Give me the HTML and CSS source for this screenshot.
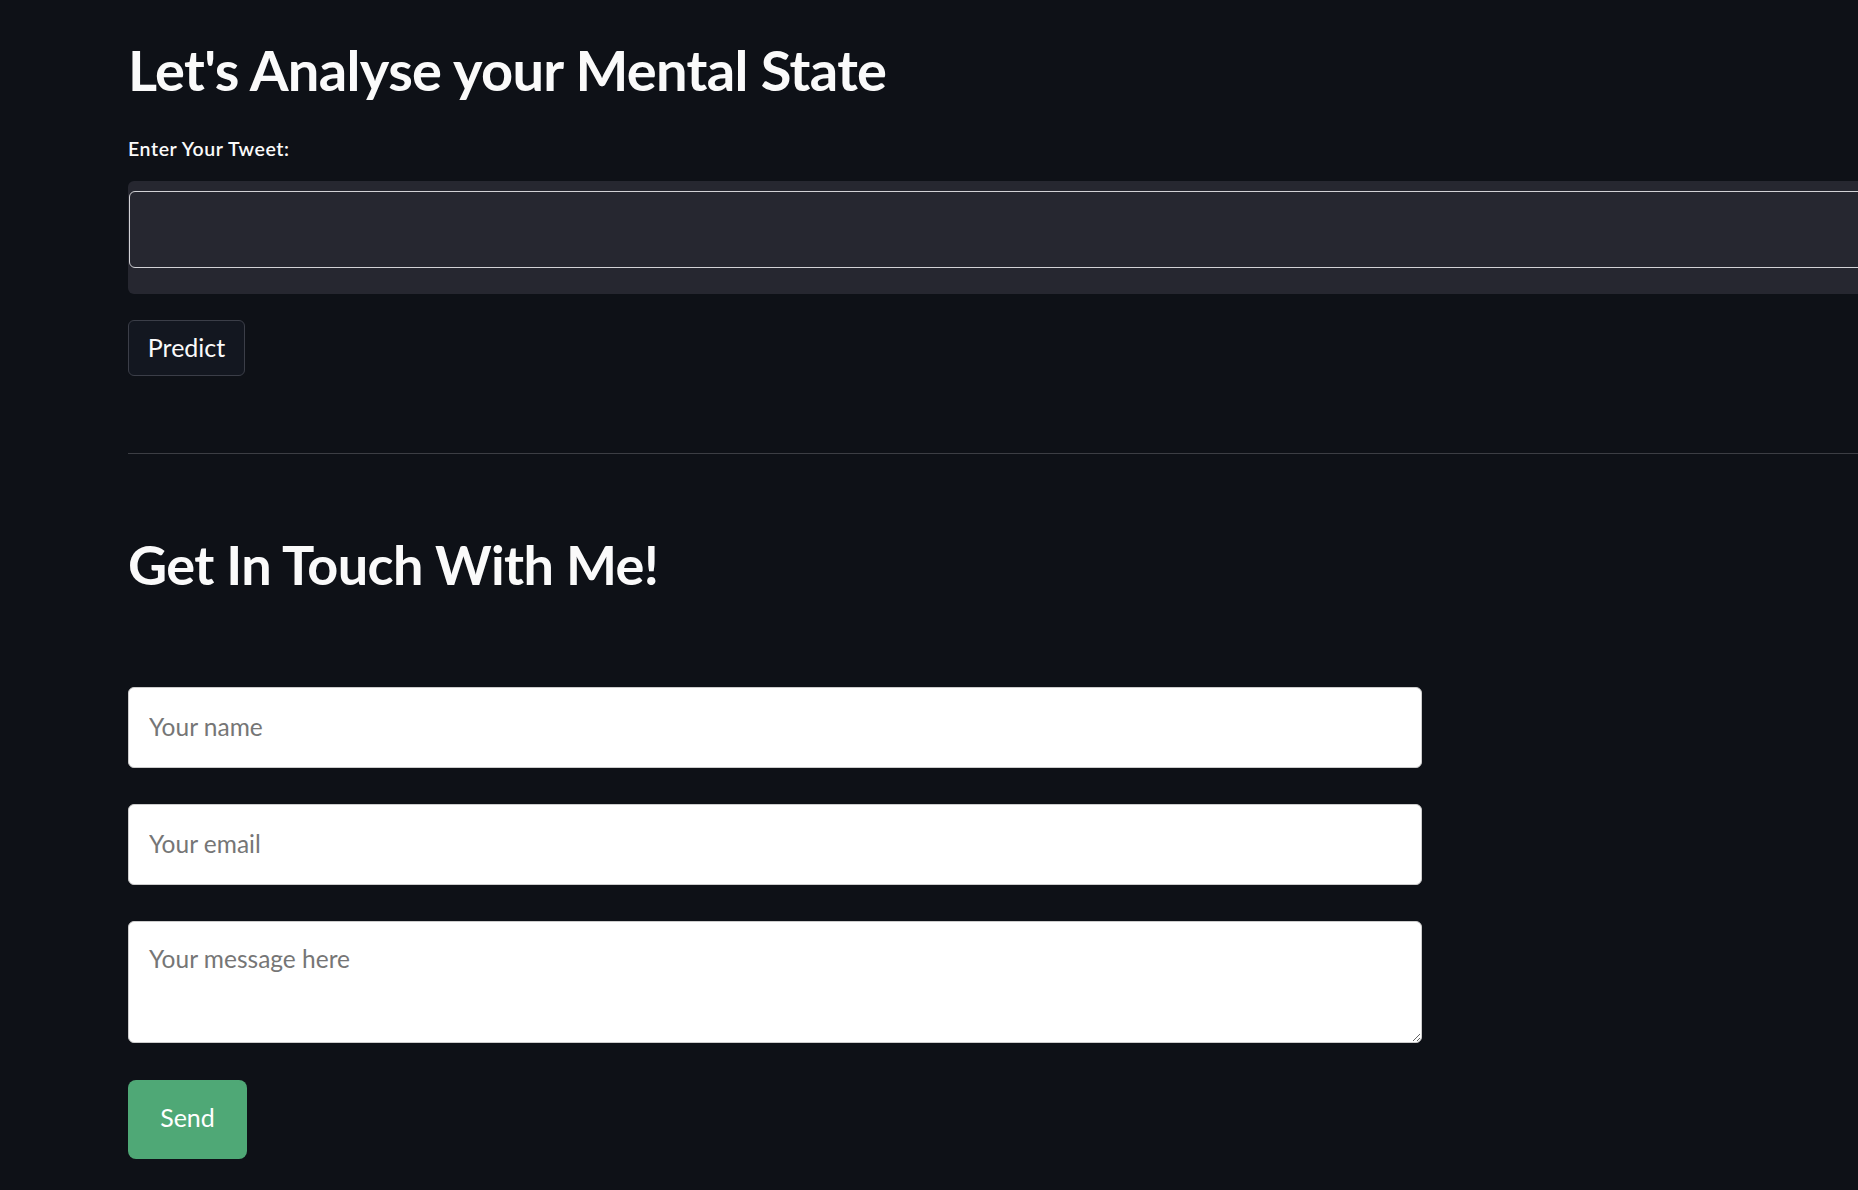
FILE: index.html
```html
<!DOCTYPE html>
<html lang="en">
<head>
<meta charset="utf-8">
<title>Mental State Analyser</title>
<link rel="stylesheet" href="styles.css">
</head>
<body>
<main class="main">
  <h1 class="title">Let's Analyse your Mental State</h1>
  <label class="field-label" for="tweet">Enter Your Tweet:</label>
  <div class="tweet-box">
    <textarea id="tweet" class="tweet-input"></textarea>
  </div>
  <button class="predict-btn" type="button">Predict</button>
  <hr class="divider">
  <h2 class="subtitle">Get In Touch With Me!</h2>
  <form class="contact-form">
    <input class="contact-input" type="text" placeholder="Your name">
    <input class="contact-input" type="email" placeholder="Your email">
    <textarea class="contact-message" placeholder="Your message here"></textarea>
    <button class="send-btn" type="button">Send</button>
  </form>
</main>
</body>
</html>
```

FILE: styles.css
```css
html, body {
  margin: 0;
  padding: 0;
  background: #0e1117;
  overflow: hidden;
}

body {
  font-family: Lato, "Noto Sans", sans-serif;
  color: #fafafa;
}

.main {
  width: 1900px;
  padding: 36px 0 0 128px;
  display: flex;
  flex-direction: column;
  align-items: flex-start;
}

.title {
  margin: 0;
  font-size: 56px;
  line-height: 67px;
  font-weight: 700;
  letter-spacing: -0.65px;
}

.field-label {
  margin-top: 34px;
  font-size: 19.5px;
  line-height: 24px;
  font-weight: 600;
  letter-spacing: 0.6px;
}

.tweet-box {
  margin-top: 20px;
  width: 100%;
  box-sizing: border-box;
  background: #262730;
  border-radius: 6px;
  padding: 10px 0 26px 1px;
}

.tweet-input {
  display: block;
  width: 100%;
  box-sizing: border-box;
  height: 77px;
  background: #262730;
  border: 1px solid #d2d2d6;
  border-radius: 6px;
  resize: none;
  outline: none;
}

.predict-btn {
  margin-top: 26px;
  width: 117px;
  height: 56px;
  background: #131720;
  border: 1px solid #3b3e48;
  border-radius: 6px;
  color: #fafafa;
  font-family: Lato, "Noto Sans", sans-serif;
  font-size: 25px;
  padding: 0 0 3px 0;
}

.divider {
  margin: 77px 0 0 0;
  width: 100%;
  border: none;
  height: 1px;
  background: #3c3e44;
}

.subtitle {
  margin: 78px 0 0 0;
  font-size: 54px;
  line-height: 65px;
  font-weight: 700;
  letter-spacing: -0.6px;
}

.contact-form {
  margin-top: 90px;
  width: 1294px;
  display: flex;
  flex-direction: column;
  align-items: flex-start;
  gap: 36px;
}

.contact-input,
.contact-message {
  width: 100%;
  box-sizing: border-box;
  background: #ffffff;
  border: 1px solid #cccccc;
  border-radius: 6px;
  padding: 0 20px;
  font-family: Lato, "Noto Sans", sans-serif;
  font-size: 24.5px;
  color: #333;
  outline: none;
}

.contact-input {
  height: 81px;
  padding-bottom: 2px;
}

.contact-message {
  height: 122px;
  padding-top: 22px;
  resize: vertical;
}

.contact-input::placeholder,
.contact-message::placeholder {
  color: #767676;
}

.send-btn {
  margin-top: 1px;
  width: 119px;
  height: 79px;
  background: #4fa876;
  border: none;
  border-radius: 8px;
  color: #ffffff;
  font-family: Lato, "Noto Sans", sans-serif;
  font-size: 25px;
  padding: 0 0 5px 0;
}
```
